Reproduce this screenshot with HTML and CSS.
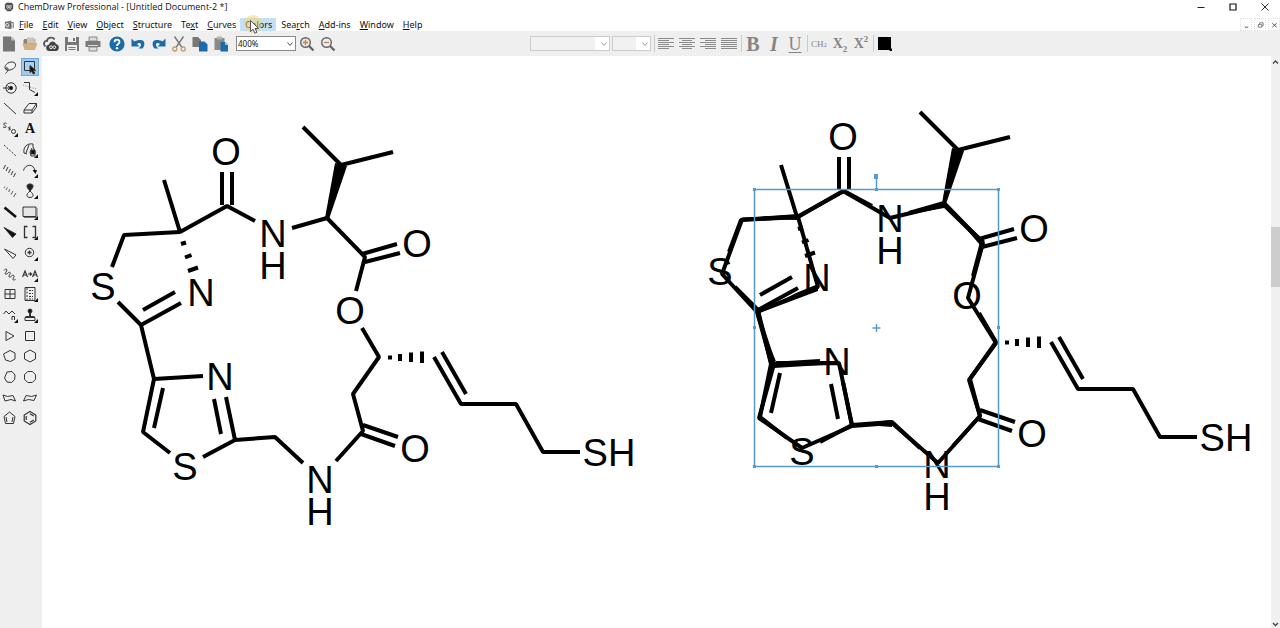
FILE: index.html
```html
<!DOCTYPE html>
<html lang="en">
<head>
<meta charset="utf-8">
<title>ChemDraw Professional - [Untitled Document-2 *]</title>
<link rel="stylesheet" href="styles.css">
</head>
<body>
<div class="app">
  <header class="titlebar">
    <svg class="logo" viewBox="0 0 12 12"><path d="M3 1h6l2 2v5L8 11H4L1 8V3z" fill="#4b4b4b"/><path d="M2 4h8M3 8.500h6" stroke="#bbb" stroke-width=".8"/><circle cx="4.500" cy="6" r="1.300" fill="none" stroke="#fff" stroke-width=".8"/><circle cx="7.500" cy="6" r="1.300" fill="none" stroke="#fff" stroke-width=".8"/></svg>
    <h1 class="title">ChemDraw Professional - [Untitled Document-2 *]</h1>
    <div class="window-controls">
      <button class="wbtn" aria-label="Minimize"><svg viewBox="0 0 8 8"><path d="M.5 4.500h7" stroke="#222"/></svg></button>
      <button class="wbtn" aria-label="Maximize"><svg viewBox="0 0 8 8"><path d="M1 1h6v6H1z" fill="none" stroke="#111" stroke-width="1.200"/></svg></button>
      <button class="wbtn" aria-label="Close"><svg viewBox="0 0 8 8"><path d="M.5.5l7 7M7.500.5l-7 7" stroke="#333"/></svg></button>
    </div>
  </header>

  <nav class="menubar">
    <svg class="logo" viewBox="0 0 12 12"><path d="M1 2l8-1v10l-8-1z" fill="#777"/><circle cx="4" cy="6" r="2" fill="none" stroke="#fff"/><path d="M6 4l3 4M9 3h2v7" stroke="#444" fill="none"/></svg>
    <button class="menu"><u>F</u>ile</button>
    <button class="menu"><u>E</u>dit</button>
    <button class="menu"><u>V</u>iew</button>
    <button class="menu"><u>O</u>bject</button>
    <button class="menu"><u>S</u>tructure</button>
    <button class="menu">Te<u>x</u>t</button>
    <button class="menu"><u>C</u>urves</button>
    <button class="menu active">C<u>o</u>lors
      <svg class="cursor" viewBox="0 0 22 24"><circle cx="11" cy="10" r="9" fill="#f6d36b" fill-opacity=".5"/><path d="M8.500 6.500v11l2.600-2.300 1.800 4 2-.9-1.800-3.800h3.400z" fill="#fff" stroke="#444" stroke-width=".9"/></svg>
    </button>
    <button class="menu">Sea<u>r</u>ch</button>
    <button class="menu"><u>A</u>dd-ins</button>
    <button class="menu"><u>W</u>indow</button>
    <button class="menu"><u>H</u>elp</button>
    <div class="doc-controls">
      <button class="dbtn" aria-label="Minimize document"><svg viewBox="0 0 8 8"><path d="M2 6.500h4" stroke="#444"/></svg></button>
      <button class="dbtn" aria-label="Restore document"><svg viewBox="0 0 8 8"><path d="M1.500 3.500h4v3h-4zM3 3V1.500h4V5H5.500" fill="none" stroke="#666" stroke-width=".9"/></svg></button>
      <button class="dbtn" aria-label="Close document"><svg viewBox="0 0 8 8"><path d="M1.500 2l5 4.500M6.500 2l-5 4.500" stroke="#444"/></svg></button>
    </div>
  </nav>

  <div class="toolbar">
    <div class="group">
      <button class="tool" aria-label="New"><svg viewBox="0 0 16 16"><path d="M2 .5h8l4 4v11H2z" fill="#767676"/><path d="M10 .5v4h4z" fill="#b9b9b9"/></svg></button>
      <button class="tool" aria-label="Open"><svg viewBox="0 0 16 16"><path d="M1.500 4l1-1h4l1 1.500H14V8H1.500z" fill="#8b8377"/><path d="M5 1.500h6l3 2v4H5z" fill="#c9c4bb"/><path d="M.5 7.500h13l2 0-2.500 6.500H2.500z" fill="#d3b083"/></svg></button>
      <button class="tool" aria-label="Open from cloud"><svg viewBox="0 0 16 16"><path d="M2.500 10.500C-.5 8 1.500 4.500 4 5c.5-4 6-4.500 7.500-1.500" fill="none" stroke="#555" stroke-width="1.800"/><path d="M5.500 15c-3.500-1-3-6 .5-6.500C7 4.500 12 4.500 13 8c4 .5 3.500 7 0 7z" fill="#444"/><circle cx="8" cy="11.200" r="1.400" fill="none" stroke="#eee"/><circle cx="11.300" cy="11.200" r="1.400" fill="none" stroke="#eee"/></svg></button>
      <button class="tool" aria-label="Save"><svg viewBox="0 0 16 16"><path d="M1 1h14v14H1z" fill="#777"/><path d="M4 1h8v5H4zM3 9h10v6H3z" fill="#eee"/><path d="M9 2h2v3H9zM4.500 11h7v1h-7zM4.500 13h7v1h-7z" fill="#777"/></svg></button>
      <button class="tool" aria-label="Print"><svg viewBox="0 0 16 16"><path d="M4 1h8v4H4zM4 11h8v4H4z" fill="#ddd" stroke="#888"/><path d="M.5 5h15v6H.5z" fill="#7b7b7b"/><path d="M3 9.500h10" stroke="#ddd"/></svg></button>
    </div>
    <div class="group sep">
      <button class="tool" aria-label="Help"><svg viewBox="0 0 16 16"><circle cx="8" cy="8" r="7.600" fill="#1b6ba8"/><path d="M5.500 6.200C5.500 2.800 10.700 3 10.500 6c-.1 1.700-2.500 2-2.500 4" fill="none" stroke="#fff" stroke-width="1.800"/><circle cx="8" cy="12.300" r="1.200" fill="#fff"/></svg></button>
      <button class="tool" aria-label="Undo"><svg viewBox="0 0 16 16"><path d="M1.500 2.500v8h8L7 8c2-1.500 4-1 4 .8 0 1.500-1 2.500-2.500 3.700h4c3-3.500 2.500-8.500-2-8.500C8 4 6 4.500 4.500 5.500z" fill="#1b6ba8"/></svg></button>
      <button class="tool" aria-label="Redo"><svg viewBox="0 0 16 16"><path d="M14.500 2.500v8h-8L9 8c-2-1.500-4-1-4 .8 0 1.500 1 2.500 2.500 3.700h-4C.5 9 1 4 5.500 4 8 4 10 4.500 11.500 5.500z" fill="#1b6ba8"/></svg></button>
    </div>
    <div class="group edit">
      <button class="tool" aria-label="Cut"><svg viewBox="0 0 16 16"><path d="M3.500.5l7.500 11M12.500.5L5 11.500" stroke="#777" stroke-width="1.400"/><circle cx="3.800" cy="13" r="2" fill="none" stroke="#c79d6a" stroke-width="1.300"/><circle cx="12.200" cy="13" r="2" fill="none" stroke="#c79d6a" stroke-width="1.300"/></svg></button>
      <button class="tool" aria-label="Copy"><svg viewBox="0 0 16 16"><path d="M.5 1H6l3 3v7H.5z" fill="#777"/><path d="M7 5.500h5.500l3 3v7H7z" fill="#1b6ba8"/></svg></button>
      <button class="tool" aria-label="Paste"><svg viewBox="0 0 16 16"><path d="M1.500 2h10v12h-10z" fill="#8a8a8a"/><path d="M4 .5h5v3H4z" fill="#b9b0a5"/><path d="M7.500 6h4.500l3 3v6.500H7.500z" fill="#1b6ba8"/><path d="M12 6v3h3z" fill="#9cc3df"/></svg></button>
    </div>
    <label class="combo zoom"><select aria-label="Zoom level"><option>400%</option></select><svg class="chev" viewBox="0 0 8 8"><path d="M1.500 2.500L4 5.500l2.500-3" fill="none" stroke="#555"/></svg></label>
    <div class="group">
      <button class="tool" aria-label="Zoom in"><svg viewBox="0 0 16 16"><path d="M9.500 9.500l5 5" stroke="#666" stroke-width="2.400"/><circle cx="6.500" cy="6.500" r="4.800" fill="#e9e2d9" stroke="#666" stroke-width="1.400"/><path d="M4 6.500h5M6.500 4v5" stroke="#b98a58" stroke-width="1.300"/></svg></button>
      <button class="tool" aria-label="Zoom out"><svg viewBox="0 0 16 16"><path d="M9.500 9.500l5 5" stroke="#666" stroke-width="2.400"/><circle cx="6.500" cy="6.500" r="4.800" fill="#eee" stroke="#666" stroke-width="1.400"/><path d="M4 6.500h5" stroke="#b98a58" stroke-width="1.300"/></svg></button>
    </div>
    <label class="combo font"><select aria-label="Font" disabled><option></option></select><svg class="chev" viewBox="0 0 8 8"><path d="M1.500 2.500L4 5.500l2.500-3" fill="none" stroke="#999"/></svg></label>
    <label class="combo size"><select aria-label="Font size" disabled><option></option></select><svg class="chev" viewBox="0 0 8 8"><path d="M1.500 2.500L4 5.500l2.500-3" fill="none" stroke="#999"/></svg></label>
    <div class="group ruled">
      <button class="tool" aria-label="Align left"><svg viewBox="0 0 16 16"><path d="M0 2.500h16M0 4.500h11M0 6.500h16M0 8.500h11M0 10.500h16M0 12.500h11" stroke="#8b8b8b"/></svg></button>
      <button class="tool" aria-label="Align center"><svg viewBox="0 0 16 16"><path d="M0 2.500h16M3 4.500h10M0 6.500h16M3 8.500h10M0 10.500h16M3 12.500h10" stroke="#8b8b8b"/></svg></button>
      <button class="tool" aria-label="Align right"><svg viewBox="0 0 16 16"><path d="M0 2.500h16M5 4.500h11M0 6.500h16M5 8.500h11M0 10.500h16M5 12.500h11" stroke="#8b8b8b"/></svg></button>
      <button class="tool" aria-label="Justify"><svg viewBox="0 0 16 16"><path d="M0 2.500h16M0 4.500h16M0 6.500h16M0 8.500h16M0 10.500h16M0 12.500h16" stroke="#8b8b8b"/></svg></button>
    </div>
    <div class="group ruled">
      <button class="tool letter bold">B</button>
      <button class="tool letter italic">I</button>
      <button class="tool letter under">U</button>
    </div>
    <div class="group ruled">
      <button class="tool script formula">CH<sub>2</sub></button>
      <button class="tool script">X<sub>2</sub></button>
      <button class="tool script">X<sup>2</sup></button>
    </div>
    <div class="group ruled">
      <button class="tool" aria-label="Color"><svg viewBox="0 0 16 16"><path d="M1 1h13v13H1zM15 12v3h-3z"/></svg></button>
    </div>
  </div>

  <div class="workspace">
    <aside class="palette">
      <button class="tool" aria-label="Lasso"><svg viewBox="0 0 16 16"><path d="M4.500 11C1 9 4 3.500 9 3c5-.5 6 4 2.500 6.500C8.500 11.500 5 11.800 4 10c-1-1.500 2-2 2 0s-1 3-2.500 4.500"/></svg></button>
      <button class="tool selected" aria-label="Marquee"><svg viewBox="0 0 16 16"><path d="M2.500 2.500h10v9h-10z" fill="#a9d2f1"/><path d="M8 6.500v7l1.700-1.400 1.600 3 1.500-.8-1.500-2.800h2.300z" fill="#111"/></svg></button>
      <button class="tool" aria-label="Structure perspective"><svg viewBox="0 0 16 16"><circle cx="9" cy="8" r="5.200"/><circle cx="9" cy="8" r="1.700" fill="#111"/><path d="M1 8h7M5.500 5.500L8 8l-2.500 2.500"/></svg></button>
      <button class="tool" aria-label="Fragment"><svg viewBox="0 0 16 16"><path d="M2 2.500h5.500v7l5.500 3"/><path d="M1 5l13 4" stroke="#888" stroke-dasharray="1 1.500"/><path class="tick" d="M16 12v4h-4z"/></svg></button>
      <button class="tool" aria-label="Solid bond"><svg viewBox="0 0 16 16"><path d="M2 3l12 11"/></svg></button>
      <button class="tool" aria-label="Eraser"><svg viewBox="0 0 16 16"><path d="M2 10l5-6.500h7.500L10 10zM2 10v3h8v-3M10 13l4.500-6V3.500"/></svg></button>
      <button class="tool" aria-label="Multiple bonds"><svg viewBox="0 0 16 16"><path d="M4.500 2.500C2 1 .5 3.500 3 4.500s1 3-2 1.500M6 6.500l3 2M8 5.500l-1 4"/><circle cx="11.500" cy="10.500" r="2"/><path class="tick" d="M16 12v4h-4z"/></svg></button>
      <button class="tool glyph">A</button>
      <button class="tool" aria-label="Dashed bond"><svg viewBox="0 0 16 16"><path d="M2 3l12 11" stroke-dasharray="2 1.500"/></svg></button>
      <button class="tool" aria-label="Pen"><svg viewBox="0 0 16 16"><path d="M2 11C1 5 5 1 11 2v3l2 4v5H9l-1-4 2-4M4 11l3-8M2 11l3 1"/><path d="M9 8h4v4H9z" fill="#111"/><path class="tick" d="M16 12v4h-4z"/></svg></button>
      <button class="tool" aria-label="Hashed bond"><svg viewBox="0 0 16 16"><path d="M1.500 7l2-4M4 9l2-4M6.500 11l2-4M9 13l2-4M11.500 15l2-4"/></svg></button>
      <button class="tool" aria-label="Arrow"><svg viewBox="0 0 16 16"><path d="M1.500 8.500C3 2 12 1 13 9"/><path class="tick" d="M10.500 8H15l-1.500 4zM16 12v4h-4z"/></svg></button>
      <button class="tool" aria-label="Hashed wedged bond"><svg viewBox="0 0 16 16"><path d="M2 5l1-1.500M4 7l1.500-2.500M6.500 9l1.500-3M9 11.500L11 8M11.500 14l2.500-4" stroke-width=".8"/></svg></button>
      <button class="tool" aria-label="Orbital"><svg viewBox="0 0 16 16"><path d="M8 8C3 3 5 1 8 1s5 2 0 7z" fill="#222"/><path d="M8 8c-5 4-3 6.500 0 6.500s5-2.500 0-6.500z"/><path class="tick" d="M16 12v4h-4z"/></svg></button>
      <button class="tool" aria-label="Bold bond"><svg viewBox="0 0 16 16"><path class="heavy" d="M2.500 3.500L14 13"/></svg></button>
      <button class="tool" aria-label="Drawing elements"><svg viewBox="0 0 16 16"><path d="M1 3h13v9.500H1z" fill="#e6e6e6"/><path d="M2 13.500h13V4" stroke="#777"/><path class="tick" d="M16 12v4h-4z"/></svg></button>
      <button class="tool" aria-label="Wedged bond"><svg viewBox="0 0 16 16"><path d="M2 3.500l12 6.500-3.500 3.500z" fill="#111"/></svg></button>
      <button class="tool" aria-label="Brackets"><svg viewBox="0 0 16 16"><path d="M5.500 2.500h-3v11h3M10.500 2.500h3v11h-3" stroke-width="1.300"/><path class="tick" d="M16 12v4h-4z"/></svg></button>
      <button class="tool" aria-label="Hollow wedged bond"><svg viewBox="0 0 16 16"><path d="M2.500 4L14 10l-3 3.500z"/></svg></button>
      <button class="tool" aria-label="Chemical symbols"><svg viewBox="0 0 16 16"><circle cx="7.500" cy="7.500" r="4.200"/><path d="M5.500 7.500h4M7.500 5.500v4" stroke-width="1.400"/><path class="tick" d="M16 12v4h-4z"/></svg></button>
      <button class="tool" aria-label="Wavy bond"><svg viewBox="0 0 16 16"><path d="M2 4.500c2-3 4-1 2 1.500s0 3 2 1 3 0 1.500 2 0 3 2 1 3.500 0 2 2 0 2.500 2 1.500"/></svg></button>
      <button class="tool" aria-label="Reaction mapping"><svg viewBox="0 0 16 16"><path d="M.5 11L3 5l2.500 6M1.500 9h3M10.500 11L13 5l2.500 6M11.500 9h3M6 8h3.500M8 6.500L9.500 8 8 9.500" stroke-width="1.200"/><path class="tick" d="M16 12v4h-4z"/></svg></button>
      <button class="tool" aria-label="Table"><svg viewBox="0 0 16 16"><path d="M3 3.500h10v9H3zM8 3.500v9M3 8h10"/></svg></button>
      <button class="tool" aria-label="TLC plate"><svg viewBox="0 0 16 16"><path d="M3 1.500h10v13H3z"/><path d="M5 2v12" stroke-dasharray="2 1.500"/><path d="M7 4.500h4M7 7.500h4M7 10.500h4M7 13h4" stroke-dasharray="2 1"/><path class="tick" d="M16 12v4h-4z"/></svg></button>
      <button class="tool" aria-label="Acyclic chain"><svg viewBox="0 0 16 16"><path d="M1.500 7l2.500-3 3 3 3-3 3 3M10 13V9.500h2.500V13"/><path class="tick" d="M16 12v4h-4z"/></svg></button>
      <button class="tool" aria-label="Templates"><svg viewBox="0 0 16 16"><path d="M3 10.500h10v3H3z"/><path d="M3.500 10h9M8 10V5" stroke-width="2"/><circle cx="8" cy="4" r="2" fill="#111"/><path class="tick" d="M16 12v4h-4z"/></svg></button>
      <button class="tool" aria-label="Cyclopropane"><svg viewBox="0 0 16 16"><path d="M4 3.500v9l8-4.500z"/></svg></button>
      <button class="tool" aria-label="Cyclobutane"><svg viewBox="0 0 16 16"><path d="M3.500 3.500h9v9h-9z"/></svg></button>
      <button class="tool" aria-label="Cyclopentane"><svg viewBox="0 0 16 16"><path d="M1.500 6L8 2.500 13 5v6l-4.500 2.500-5-1.500z"/></svg></button>
      <button class="tool" aria-label="Cyclohexane"><svg viewBox="0 0 16 16"><path d="M8 2l5.500 3v6L8 14l-5.500-3V5z"/></svg></button>
      <button class="tool" aria-label="Cycloheptane"><svg viewBox="0 0 16 16"><path d="M5 3l5-.5 3 3.500-.3 4.500-3.200 3-4.500-.5-2.500-4z"/></svg></button>
      <button class="tool" aria-label="Cyclooctane"><svg viewBox="0 0 16 16"><path d="M5.700 2.500h4.600l3.200 3.200v4.600l-3.200 3.200H5.700l-3.200-3.200V5.700z"/></svg></button>
      <button class="tool" aria-label="Chair left"><svg viewBox="0 0 16 16"><path d="M1 5l4.500 1.500L11 5.500 13.500 11 9 9.500 3 11z"/></svg></button>
      <button class="tool" aria-label="Chair right"><svg viewBox="0 0 16 16"><path d="M1.500 11L4 5.500l5.500 1 5-1.500L12 10.500l-5.500-1z"/></svg></button>
      <button class="tool" aria-label="Cyclopentadiene"><svg viewBox="0 0 16 16"><path d="M7.500 2L13 6.500l-1.500 7h-8L2 6.500zM11 7l-1 5M4 7l1 5"/></svg></button>
      <button class="tool" aria-label="Benzene"><svg viewBox="0 0 16 16"><path d="M8 1.500L13.800 5v6L8 14.500 2.200 11V5zM8 3.800l3.800 2.200M11.800 10L8 12.300M4.200 6v4" stroke-width="1.200"/></svg></button>
    </aside>

    <main class="document">
      <svg class="sheet" viewBox="42 56 1229 572" preserveAspectRatio="xMinYMin meet">
        <defs>
          <g id="bonds">
            <path class="bond" d="M164 180L180 232L124 235L112 267M180 232L227 206L255 221M222 172V205M232 172V205
              M292 228L327 218L365 257L356 291M303 127L341 165L393 152M362 254L397 244M365 262L400 253
              M362 328L379 357L353 394L363 431L336 461M363 425L398 437M361 434L395 446
              M434 357L461 404H516L543 452H580M442 352L466 394
              M303 463L275 437L235 440L203 457M226 397L235 440M214 399L221 434M203 376L154 379L143 432L170 453M163 388L154 428
              M154 379L141 325L118 302M141 325L181 303M143 310L175 292"/>
            <path d="M325 218L335 163L347 166L329 219z"/>
            <path class="bond" d="M181 244L186 242.500M185 257.500L191.500 255M188 271L198 267.500"/>
            <path d="M388 355.500h4v4h-4zM398 354h4v7h-4zM409 352.500h4v9.500h-4zM420 351.500h4v11.500h-4z"/>
          </g>
        </defs>
        <use href="#bonds"/>
        <g class="atoms">
          <text x="226" y="165">O</text><text x="273" y="247">N<tspan x="273" dy="32">H</tspan></text>
          <text x="417" y="257">O</text><text x="350" y="324">O</text><text x="103" y="300">S</text>
          <text x="201" y="306">N</text><text x="220" y="390">N</text><text x="185" y="480">S</text>
          <text x="320" y="493">N<tspan x="320" dy="32">H</tspan></text><text x="415" y="462">O</text>
          <text x="609" y="466">SH</text>
        </g>
        <use href="#bonds" x="617" y="-15"/>
        <g class="atoms">
          <text x="843" y="150">O</text><text x="890" y="232">N<tspan x="890" dy="32">H</tspan></text>
          <text x="1034" y="242">O</text><text x="967" y="309">O</text><text x="720" y="285">S</text>
          <text x="817" y="291">N</text><text x="837" y="375">N</text><text x="802" y="465">S</text>
          <text x="937" y="478">N<tspan x="937" dy="32">H</tspan></text><text x="1032" y="447">O</text>
          <text x="1226" y="451">SH</text>
        </g>
        <path class="bond" d="M797 217L742 219.500L722 274L757 312L818 287L798 217L843 191L890 218L944 205L983 243L968 298L996 343L969 380L980 416L938 463L892 423L852 426L839 363L774 364L759 418L802 448L852 426M757 312L774 364"/>
        <path d="M757 314L818 291V284L796 293zM755 312L770 366H778zM742 218L798 214V220zM890 218L944 202V208zM944 203L985 241L980 245zM852 424L892 420V427zM774 361L839 361V364L774 368z"/>
        <g class="selection">
          <path d="M754.500 189.500H998.500V466.500H754.500zM876.500 189V178M872.500 328h8M876.500 324v8"/>
          <path class="handle" d="M753 188h3v3h-3zM997 188h3v3h-3zM753 465h3v3h-3zM997 465h3v3h-3zM875 188h3v3h-3zM875 465h3v3h-3zM753 326h3v3h-3zM997 326h3v3h-3zM874 174h4v5h-4z"/>
        </g>
      </svg>
    </main>
    <div class="scrollbar">
      <svg viewBox="0 0 8 8"><path d="M1.500 5.500L4 3l2.500 2.500" fill="none" stroke="#444" stroke-width="1.300"/></svg>
      <div class="track"><div class="thumb"></div></div>
      <svg viewBox="0 0 8 8"><path d="M1.500 3L4 5.500 6.500 3" fill="none" stroke="#444" stroke-width="1.300"/></svg>
    </div>
  </div>
</div>
</body>
</html>
```
FILE: styles.css
```css
* { box-sizing: border-box; }
body { margin: 0; background: #fff; color: #111; font-family: "Noto Sans", "Open Sans", sans-serif; font-size: 9px; }
button { margin: 0; padding: 0; border: 0; background: none; color: inherit; font: inherit; }
svg { display: block; }
.app { display: flex; flex-direction: column; height: 100vh; overflow: hidden; }

.titlebar { display: flex; align-items: center; height: 18px; padding: 0 11px 4px 4px; gap: 4px; }
.logo { width: 10px; height: 10px; }
.title { margin: 0; font-family: "Open Sans", sans-serif; font-size: 9px; line-height: 12px; font-weight: 400; }
.window-controls { display: flex; gap: 24px; margin-left: auto; }
.wbtn svg { width: 8px; height: 8px; }

.menubar { display: flex; align-items: center; height: 13px; padding: 0 0 0 4px; }
.menu { position: relative; height: 13px; padding: 0 4px 0 5px; line-height: 13px; white-space: nowrap; }
.menu u { text-underline-offset: 1px; }
.active { background: #c5dff5; }
.cursor { position: absolute; left: 2px; top: -4px; width: 22px; height: 24px; z-index: 2; }
.doc-controls { display: flex; gap: 2px; margin-left: auto; }
.dbtn { padding: 2px; border: 1px dotted #ddd; width: 12px; height: 13px; }
.dbtn svg { width: 7px; height: 8px; }

.toolbar { display: flex; align-items: center; height: 25px; padding-left: 1px; background: #efefef; flex: none; }
.group { display: flex; align-items: center; gap: 5px; }
.tool { display: flex; align-items: center; justify-content: center; width: 16px; height: 16px; }
.tool svg { width: 16px; height: 16px; }
.sep { margin-left: 8px; }
.edit { margin-left: 4px; }
.combo { position: relative; display: block; height: 15px; }
.combo select { display: block; width: 100%; height: 100%; margin: 0; padding: 0 1px; border: 1px solid #888; border-radius: 0; background: #fff; color: #111; font: 8px "Noto Sans", sans-serif; appearance: none; }
.combo select:disabled { border-color: #ccc; background: linear-gradient(to left, #fff 14px, #f1f1f1 14px); opacity: 1; }
.chev { position: absolute; right: 2px; top: 4px; width: 8px; height: 8px; pointer-events: none; }
.zoom { width: 60px; margin: 0 3px 0 7px; }
.font { width: 80px; margin-left: 194px; }
.size { width: 39px; margin: 0 3px 0 2px; }
.ruled { border-left: 1px solid #ccc; padding: 0 4px 0 3px; height: 17px; }
.letter { font: 20px/16px "Liberation Serif", serif; color: #858585; }
.bold { font-weight: 700; }
.italic { font-style: italic; font-weight: 700; }
.under { text-decoration: underline; text-underline-offset: 2px; font-size: 18px; }
.script { display: block; font: 14px/16px "Liberation Serif", serif; color: #858585; font-weight: 700; white-space: nowrap; }
.script sub, .script sup { font-size: 9px; line-height: 0; }
.formula { font-size: 9px; font-weight: 400; }
.formula sub { font-size: 7px; vertical-align: baseline; }

.workspace { display: flex; flex: 1; min-height: 0; }
.palette { display: grid; grid-template-columns: 16px 16px; column-gap: 4px; grid-auto-rows: 21px 21px 20px; align-content: start; align-items: center; width: 42px; padding: 0 0 0 2px; background: #efefef; flex: none; }
.palette svg { fill: none; stroke: #333; stroke-width: 1; }
.palette .tick { fill: #111; stroke: none; }
.palette .heavy { stroke: #111; stroke-width: 2.6; }
.selected { background: #9ccbee; outline: 1px solid #6fa8d3; }
.glyph { font: 700 14px/16px "Liberation Serif", serif; }

.document { flex: 1; min-width: 0; overflow: hidden; background: #fff; }
.sheet { width: 100%; height: auto; }
.bond { fill: none; stroke: #000; stroke-width: 4; stroke-linejoin: bevel; }
.atoms { font-family: "Liberation Sans", Arial, sans-serif; font-size: 38px; text-anchor: middle; }
.selection { fill: none; stroke: #559bd3; stroke-width: 1.5; }
.handle { fill: #559bd3; stroke: none; }

.scrollbar { display: flex; flex-direction: column; width: 9px; background: #f0f0f0; flex: none; padding: 2px 0 0; }
.scrollbar svg { width: 9px; height: 8px; flex: none; }
.track { flex: 1; display: flex; flex-direction: column; }
.track::before { content: ""; flex: 161 0 0; }
.track::after { content: ""; flex: 333 0 0; }
.thumb { flex: 60 0 0; background: #cdcdcd; }
```
